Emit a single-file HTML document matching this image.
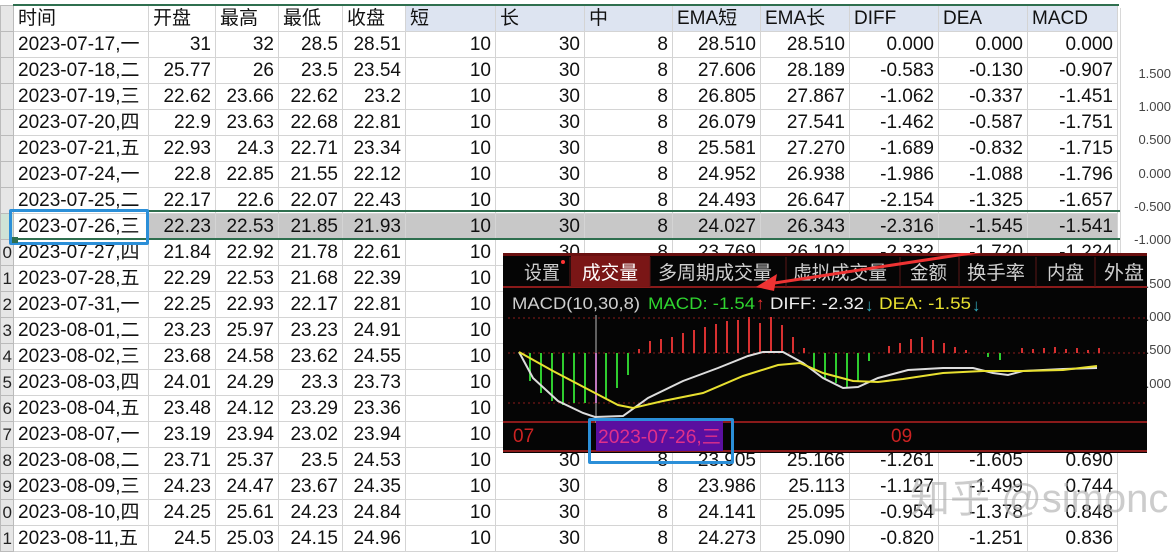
<!DOCTYPE html>
<html><head><meta charset="utf-8"><style>
*{margin:0;padding:0;box-sizing:border-box}
body{width:1171px;height:533px;overflow:hidden;background:#fff;position:relative;font-family:"Liberation Sans","Noto Sans CJK SC",sans-serif;color:#111}
table{position:absolute;left:0;top:5px;border-collapse:collapse;table-layout:fixed;font-size:19px}
td{height:26px;border:1px solid #d4d4d4;padding:0 4px;white-space:nowrap;overflow:hidden;text-align:right;line-height:24px}
td.rn{background:#e6e6e6;color:#222;text-align:right;padding:0 1px;font-size:17px;border-color:#bbb}
td.l{text-align:left}
tr.h td{text-align:left}
tr.h td.b{background:#dde4f1}
tr.sel td{background:#c8c8c8}
#topline{position:absolute;left:13px;top:4px;width:1106px;height:2px;background:#2f6f4f}
#rp{position:absolute;left:1120px;top:8px;width:51px;height:422px;background:#fff;border-left:1px solid #d8d8d8;font-size:13px;color:#444}
#rp div{position:absolute;right:0}
</style></head><body>
<table>
<colgroup><col style="width:13px"><col style="width:135px"><col style="width:67px"><col style="width:63px"><col style="width:64px"><col style="width:63px"><col style="width:90px"><col style="width:89px"><col style="width:88px"><col style="width:88px"><col style="width:89px"><col style="width:89px"><col style="width:89px"><col style="width:90px"></colgroup>
<tr class="h"><td class="rn"></td><td>时间</td><td>开盘</td><td>最高</td><td>最低</td><td>收盘</td><td class="b">短</td><td class="b">长</td><td class="b">中</td><td class="b">EMA短</td><td class="b">EMA长</td><td class="b">DIFF</td><td class="b">DEA</td><td class="b">MACD</td></tr>
<tr><td class="rn"></td><td class="l">2023-07-17,一</td><td>31</td><td>32</td><td>28.5</td><td>28.51</td><td>10</td><td>30</td><td>8</td><td>28.510</td><td>28.510</td><td>0.000</td><td>0.000</td><td>0.000</td></tr>
<tr><td class="rn"></td><td class="l">2023-07-18,二</td><td>25.77</td><td>26</td><td>23.5</td><td>23.54</td><td>10</td><td>30</td><td>8</td><td>27.606</td><td>28.189</td><td>-0.583</td><td>-0.130</td><td>-0.907</td></tr>
<tr><td class="rn"></td><td class="l">2023-07-19,三</td><td>22.62</td><td>23.66</td><td>22.62</td><td>23.2</td><td>10</td><td>30</td><td>8</td><td>26.805</td><td>27.867</td><td>-1.062</td><td>-0.337</td><td>-1.451</td></tr>
<tr><td class="rn"></td><td class="l">2023-07-20,四</td><td>22.9</td><td>23.63</td><td>22.68</td><td>22.81</td><td>10</td><td>30</td><td>8</td><td>26.079</td><td>27.541</td><td>-1.462</td><td>-0.587</td><td>-1.751</td></tr>
<tr><td class="rn"></td><td class="l">2023-07-21,五</td><td>22.93</td><td>24.3</td><td>22.71</td><td>23.34</td><td>10</td><td>30</td><td>8</td><td>25.581</td><td>27.270</td><td>-1.689</td><td>-0.832</td><td>-1.715</td></tr>
<tr><td class="rn"></td><td class="l">2023-07-24,一</td><td>22.8</td><td>22.85</td><td>21.55</td><td>22.12</td><td>10</td><td>30</td><td>8</td><td>24.952</td><td>26.938</td><td>-1.986</td><td>-1.088</td><td>-1.796</td></tr>
<tr><td class="rn"></td><td class="l">2023-07-25,二</td><td>22.17</td><td>22.6</td><td>22.07</td><td>22.43</td><td>10</td><td>30</td><td>8</td><td>24.493</td><td>26.647</td><td>-2.154</td><td>-1.325</td><td>-1.657</td></tr>
<tr class="sel"><td class="rn" style="background:#cfe3d6"></td><td class="l" style="background:#fff">2023-07-26,三</td><td>22.23</td><td>22.53</td><td>21.85</td><td>21.93</td><td>10</td><td>30</td><td>8</td><td>24.027</td><td>26.343</td><td>-2.316</td><td>-1.545</td><td>-1.541</td></tr>
<tr><td class="rn">0</td><td class="l">2023-07-27,四</td><td>21.84</td><td>22.92</td><td>21.78</td><td>22.61</td><td>10</td><td>30</td><td>8</td><td>23.769</td><td>26.102</td><td>-2.332</td><td>-1.720</td><td>-1.224</td></tr>
<tr><td class="rn">1</td><td class="l">2023-07-28,五</td><td>22.29</td><td>22.53</td><td>21.68</td><td>22.39</td><td>10</td><td>30</td><td>8</td><td></td><td></td><td></td><td></td><td></td></tr>
<tr><td class="rn">2</td><td class="l">2023-07-31,一</td><td>22.25</td><td>22.93</td><td>22.17</td><td>22.81</td><td>10</td><td>30</td><td>8</td><td></td><td></td><td></td><td></td><td></td></tr>
<tr><td class="rn">3</td><td class="l">2023-08-01,二</td><td>23.23</td><td>25.97</td><td>23.23</td><td>24.91</td><td>10</td><td>30</td><td>8</td><td></td><td></td><td></td><td></td><td></td></tr>
<tr><td class="rn">4</td><td class="l">2023-08-02,三</td><td>23.68</td><td>24.58</td><td>23.62</td><td>24.55</td><td>10</td><td>30</td><td>8</td><td></td><td></td><td></td><td></td><td></td></tr>
<tr><td class="rn">5</td><td class="l">2023-08-03,四</td><td>24.01</td><td>24.29</td><td>23.3</td><td>23.73</td><td>10</td><td>30</td><td>8</td><td></td><td></td><td></td><td></td><td></td></tr>
<tr><td class="rn">6</td><td class="l">2023-08-04,五</td><td>23.48</td><td>24.12</td><td>23.29</td><td>23.36</td><td>10</td><td>30</td><td>8</td><td></td><td></td><td></td><td></td><td></td></tr>
<tr><td class="rn">7</td><td class="l">2023-08-07,一</td><td>23.19</td><td>23.94</td><td>23.02</td><td>23.94</td><td>10</td><td>30</td><td>8</td><td></td><td></td><td></td><td></td><td></td></tr>
<tr><td class="rn">8</td><td class="l">2023-08-08,二</td><td>23.71</td><td>25.37</td><td>23.5</td><td>24.53</td><td>10</td><td>30</td><td>8</td><td>23.905</td><td>25.166</td><td>-1.261</td><td>-1.605</td><td>0.690</td></tr>
<tr><td class="rn">9</td><td class="l">2023-08-09,三</td><td>24.23</td><td>24.47</td><td>23.67</td><td>24.35</td><td>10</td><td>30</td><td>8</td><td>23.986</td><td>25.113</td><td>-1.127</td><td>-1.499</td><td>0.744</td></tr>
<tr><td class="rn">0</td><td class="l">2023-08-10,四</td><td>24.25</td><td>25.61</td><td>24.23</td><td>24.84</td><td>10</td><td>30</td><td>8</td><td>24.141</td><td>25.095</td><td>-0.954</td><td>-1.378</td><td>0.848</td></tr>
<tr><td class="rn">1</td><td class="l">2023-08-11,五</td><td>24.5</td><td>25.03</td><td>24.15</td><td>24.96</td><td>10</td><td>30</td><td>8</td><td>24.273</td><td>25.090</td><td>-0.820</td><td>-1.251</td><td>0.836</td></tr>
</table>
<div id="topline"></div>
<div style="position:absolute;left:13px;top:210px;width:1108px;height:2px;background:#2f6f4f"></div>
<div style="position:absolute;left:13px;top:238px;width:1108px;height:2px;background:#2f6f4f"></div>
<div style="position:absolute;left:9px;top:209px;width:140px;height:36px;border:3px solid #2b8fd8;border-radius:2px"></div>
<div style="position:absolute;left:12px;top:237px;width:6px;height:6px;background:#2f6f4f"></div>
<div id="rp"><div style="top:58px">1.500</div><div style="top:91px">1.000</div><div style="top:124px">0.500</div><div style="top:158px">0.000</div><div style="top:191px">-0.500</div><div style="top:224px">-1.000</div><div style="top:268px">.500</div><div style="top:301px">.000</div><div style="top:334px">.500</div><div style="top:368px">.000</div></div>

<svg style="position:absolute;left:503px;top:253px" width="644" height="200" viewBox="0 0 644 200" font-family="Liberation Sans, Noto Sans CJK SC, sans-serif">
<rect width="644" height="200" fill="#050505"/>
<rect x="0" y="0" width="644" height="3" fill="#6a1010"/>
<line x1="0" y1="34" x2="644" y2="34" stroke="#8a1a1a" stroke-width="2"/>
<rect x="68" y="3" width="79" height="31" fill="#7a1616"/>
<g font-size="19" fill="#cfcfcf">
<text x="21" y="26" textLength="36" lengthAdjust="spacingAndGlyphs">设置</text>
<circle cx="60" cy="9" r="2" fill="#f33"/>
<text x="79" y="26" fill="#fff" textLength="56" lengthAdjust="spacingAndGlyphs">成交量</text>
<text x="155" y="26" textLength="114" lengthAdjust="spacingAndGlyphs">多周期成交量</text>
<text x="290" y="26" textLength="94" lengthAdjust="spacingAndGlyphs">虚拟成交量</text>
<text x="407" y="26" textLength="37" lengthAdjust="spacingAndGlyphs">金额</text>
<text x="464" y="26" textLength="58" lengthAdjust="spacingAndGlyphs">换手率</text>
<text x="544" y="26" textLength="37" lengthAdjust="spacingAndGlyphs">内盘</text>
<text x="601" y="26" textLength="40" lengthAdjust="spacingAndGlyphs">外盘</text>
</g>
<g stroke="#5a1818" stroke-width="1"><line x1="67" y1="4" x2="67" y2="34"/><line x1="147" y1="4" x2="147" y2="34"/><line x1="283" y1="4" x2="283" y2="34"/><line x1="397" y1="4" x2="397" y2="34"/><line x1="456" y1="4" x2="456" y2="34"/><line x1="533" y1="4" x2="533" y2="34"/><line x1="592" y1="4" x2="592" y2="34"/></g>
<g font-size="17"><text x="9" y="56" fill="#cfcfcf" textLength="128" lengthAdjust="spacingAndGlyphs">MACD(10,30,8)</text><text x="145" y="56" fill="#2fd52f" textLength="107" lengthAdjust="spacingAndGlyphs">MACD: -1.54</text><text x="253" y="56" fill="#e33">↑</text><text x="267" y="56" fill="#eee" textLength="94" lengthAdjust="spacingAndGlyphs">DIFF: -2.32</text><text x="362" y="58" fill="#3ab">↓</text><text x="376" y="56" fill="#e8e030" textLength="92" lengthAdjust="spacingAndGlyphs">DEA: -1.55</text><text x="469" y="58" fill="#3ab">↓</text></g>
<g stroke="#8a1a1a" stroke-dasharray="2,3"><line x1="5" y1="65" x2="644" y2="65"/><line x1="5" y1="100" x2="644" y2="100"/><line x1="5" y1="150" x2="644" y2="150"/></g>
<line x1="0" y1="169" x2="644" y2="169" stroke="#8a1a1a" stroke-width="2"/>
<line x1="0" y1="198" x2="644" y2="198" stroke="#8a1a1a" stroke-width="2"/>
<g stroke="#2ecc2e" stroke-width="2">
<line x1="27" y1="100" x2="27" y2="128"/><line x1="38" y1="100" x2="38" y2="140"/><line x1="49" y1="100" x2="49" y2="148"/><line x1="60" y1="100" x2="60" y2="152"/><line x1="71" y1="100" x2="71" y2="150"/><line x1="82" y1="100" x2="82" y2="150"/><line x1="103" y1="100" x2="103" y2="145"/><line x1="114" y1="100" x2="114" y2="135"/><line x1="125" y1="100" x2="125" y2="122"/>
<line x1="311" y1="100" x2="311" y2="118"/><line x1="322" y1="100" x2="322" y2="126"/><line x1="333" y1="100" x2="333" y2="130"/><line x1="344" y1="100" x2="344" y2="134"/><line x1="355" y1="100" x2="355" y2="128"/><line x1="366" y1="100" x2="366" y2="108"/><line x1="485" y1="100" x2="485" y2="104"/><line x1="497" y1="100" x2="497" y2="107"/>
</g>
<line x1="93" y1="100" x2="93" y2="150" stroke="#c030c0" stroke-width="2"/>
<g stroke="#d83030" stroke-width="2">
<line x1="136" y1="100" x2="136" y2="96"/><line x1="147" y1="100" x2="147" y2="88"/><line x1="158" y1="100" x2="158" y2="86"/><line x1="169" y1="100" x2="169" y2="84"/><line x1="180" y1="100" x2="180" y2="80"/><line x1="191" y1="100" x2="191" y2="77"/><line x1="202" y1="100" x2="202" y2="74"/><line x1="213" y1="100" x2="213" y2="71"/><line x1="224" y1="100" x2="224" y2="68"/><line x1="235" y1="100" x2="235" y2="67"/><line x1="246" y1="100" x2="246" y2="64"/><line x1="257" y1="100" x2="257" y2="70"/><line x1="268" y1="100" x2="268" y2="64"/><line x1="279" y1="100" x2="279" y2="72"/><line x1="290" y1="100" x2="290" y2="84"/><line x1="301" y1="100" x2="301" y2="95"/>
<line x1="386" y1="100" x2="386" y2="93"/><line x1="397" y1="100" x2="397" y2="90"/><line x1="408" y1="100" x2="408" y2="86"/><line x1="419" y1="100" x2="419" y2="84"/><line x1="430" y1="100" x2="430" y2="87"/><line x1="441" y1="100" x2="441" y2="90"/><line x1="452" y1="100" x2="452" y2="94"/><line x1="463" y1="100" x2="463" y2="97"/>
<line x1="519" y1="100" x2="519" y2="95"/><line x1="530" y1="100" x2="530" y2="96"/><line x1="541" y1="100" x2="541" y2="95"/><line x1="552" y1="100" x2="552" y2="94"/><line x1="563" y1="100" x2="563" y2="96"/><line x1="574" y1="100" x2="574" y2="95"/><line x1="585" y1="100" x2="585" y2="97"/><line x1="596" y1="100" x2="596" y2="95"/>
</g>
<line x1="93" y1="62" x2="93" y2="170" stroke="#bbb" stroke-width="1"/>
<polyline fill="none" stroke="#ddd" stroke-width="2" points="16,99 30,125 55,148 80,160 92,164 120,163 145,145 180,128 215,115 245,103 260,99 280,99 300,110 320,125 340,135 355,134 375,125 405,117 440,115 470,115 490,120 505,122 520,118 560,116 594,115"/>
<polyline fill="none" stroke="#e8e030" stroke-width="2" points="16,99 50,118 92,140 115,152 130,155 160,148 200,140 240,123 275,112 297,110 320,120 350,128 375,129 400,126 440,120 480,118 520,118 560,117 594,113"/>
<polyline fill="none" stroke="#e33" stroke-width="3" points="567,-15 265,31"/>
<polygon points="253,34 274,21 271,38" fill="#e33"/>
<text x="10" y="189" font-size="19" fill="#c22">07</text>
<text x="388" y="189" font-size="19" fill="#c22">09</text>
<rect x="93" y="167" width="127" height="31" fill="#5a0fa0"/>
<text x="95" y="190" font-size="19" fill="#e0308a" textLength="123" lengthAdjust="spacingAndGlyphs">2023-07-26,三</text>
</svg>
<div style="position:absolute;left:588px;top:418px;width:146px;height:46px;border:3px solid #2b8fd8;border-radius:2px"></div>
<div style="position:absolute;left:910px;top:466px;font-size:40px;color:rgba(170,170,170,0.6);font-family:'Liberation Sans','Noto Sans CJK SC',sans-serif;white-space:nowrap">知乎 @simonc</div>
</body></html>
